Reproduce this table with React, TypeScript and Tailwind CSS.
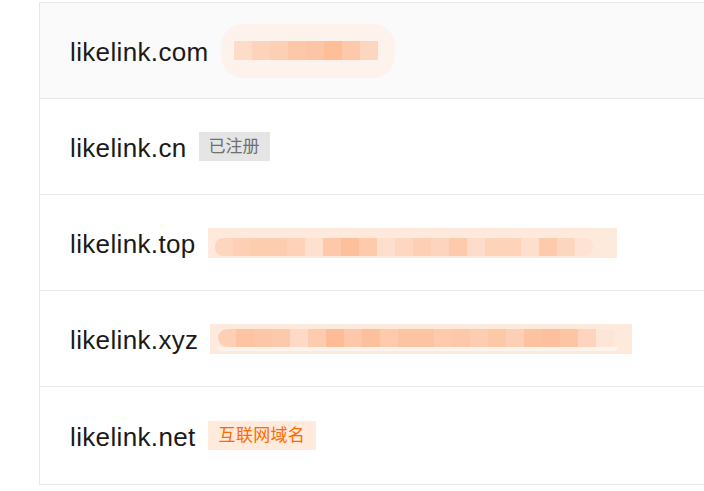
import React from "react";

const font = { fontFamily: '"Liberation Sans", Arial, "Noto Sans CJK SC", sans-serif' };

function Blur1() {
  const colors = ["#fddcc8", "#fdd3bc", "#fdd0b6", "#fcc8a8", "#fcc6a6", "#fdbe98", "#fdc9aa", "#fdd6bf"];
  return (
    <div className="ml-[12px] flex h-[54px] w-[174px] items-center rounded-[22px] bg-[#fdf2ec] pl-[13px]">
      <div className="flex h-[19px] rounded-[4px]">
        {colors.map((c, i) => (
          <div key={i} style={{ backgroundColor: c }} className="h-full w-[18px]" />
        ))}
      </div>
    </div>
  );
}

function Blur3() {
  const colors = [
    "#fdd6c0", "#fdd0b5", "#fdcdb0", "#fdcdb0", "#fdd2b8", "#fee0cf", "#fdc9aa", "#fdc09c",
    "#fdcaab", "#fedfce", "#fdd7c2", "#fdd0b6", "#fdd5be", "#fdcaac", "#fedccb", "#fdd3ba",
    "#fdd3ba", "#fedfce", "#fdcaab", "#fdd6c0", "#fee2d3",
  ];
  return (
    <div className="ml-[12px] flex h-[30px] w-[409px] items-end bg-[#feeadd] pb-[2px] pl-[7px]">
      <div className="flex h-[18px] overflow-hidden rounded-[8px]">
        {colors.map((c, i) => (
          <div key={i} style={{ backgroundColor: c }} className="h-full w-[18px]" />
        ))}
      </div>
    </div>
  );
}

function Blur4() {
  const colors = [
    "#fdd0b5", "#fdc3a2", "#fdc6a7", "#fdc9ab", "#fed9c6", "#fdcbae", "#fdbc96", "#fdc8a9",
    "#fdc09d", "#fdcaab", "#fdc4a4", "#fdc4a4", "#fdcaac", "#fdc8a9", "#fdcdb2", "#fdc8a6",
    "#fdd0b5", "#fdc3a1", "#fdc09c", "#fdc5a4", "#fdd4bd", "#fde6d8",
  ];
  return (
    <div className="ml-[12px] flex h-[30px] w-[422px] flex-col justify-start bg-[#feeadd] pl-[8px] pt-[5px]">
      <div className="flex h-[18px] overflow-hidden rounded-l-[9px]">
        {colors.map((c, i) => (
          <div key={i} style={{ backgroundColor: c }} className="h-full w-[18px]" />
        ))}
      </div>
      <div className="h-[4px] w-[400px] rounded-b-[6px] bg-[#fef4ee]" />
    </div>
  );
}

function Row({ name, children, bg, last }: { name: string; children?: React.ReactNode; bg?: string; last?: boolean }) {
  return (
    <div
      className={`flex items-center border-b border-[#e8e8e8] pl-[30px] ${last ? "h-[98px]" : "h-[96px]"} ${bg ?? "bg-white"}`}
    >
      <span className="pt-[3px] text-[26px] leading-none tracking-[0.35px] text-[#1a1a1a]">{name}</span>
      {children}
    </div>
  );
}

export default function App() {
  return (
    <div className="h-[491px] w-[704px] overflow-hidden bg-white pt-[2px]" style={font}>
      <div className="ml-[39px] w-[700px] border-l border-t border-[#e8e8e8]">
        <Row name="likelink.com" bg="bg-[#fafafa]">
          <Blur1 />
        </Row>
        <Row name="likelink.cn">
          <span className="ml-[12px] h-[29px] bg-[#e5e5e5] px-[10px] text-[17px] leading-[29px] text-[#707070]">
            已注册
          </span>
        </Row>
        <Row name="likelink.top">
          <Blur3 />
        </Row>
        <Row name="likelink.xyz">
          <Blur4 />
        </Row>
        <Row name="likelink.net" last>
          <span className="ml-[12px] h-[29px] bg-[#ffeadb] px-[11px] text-[17px] leading-[29px] tracking-[0.3px] text-[#ff6a00]">
            互联网域名
          </span>
        </Row>
      </div>
    </div>
  );
}
